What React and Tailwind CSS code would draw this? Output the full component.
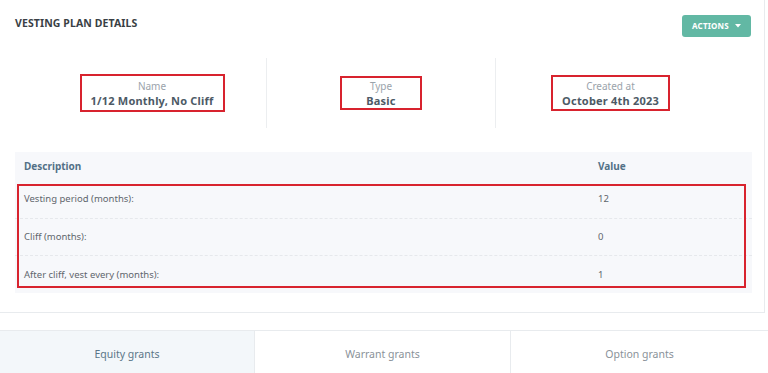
export default function App() {
  const rows = [
    ["Vesting period (months):", "12"],
    ["Cliff (months):", "0"],
    ["After cliff, vest every (months):", "1"],
  ];
  return (
    <div className="w-[768px] h-[373px] bg-white overflow-hidden" style={{ fontFamily: '"Noto Sans", "Open Sans", sans-serif' }}>
      <div className="w-[765px] h-[313px] border-r border-b border-[#e8ebee] bg-white flex flex-col">
        <div className="flex items-start justify-between pl-[15px] pr-[13px] pt-[15px] h-[58px]">
          <div className="text-[10.5px] font-bold text-[#3a3f45] tracking-[0.1px] mt-[1px]">VESTING PLAN DETAILS</div>
          <button className="h-[22px] w-[69px] rounded-[3px] bg-[#62b8a4] text-white text-[8px] font-bold flex items-center justify-center gap-[6px] tracking-[0.2px]">
            ACTIONS
            <svg width="6" height="4" viewBox="0 0 6 4"><path d="M0 0 L6 0 L3 3.5 Z" fill="white" /></svg>
          </button>
        </div>
        <div className="ml-[38px] w-[687px] h-[70px] grid grid-cols-3">
          <div className="flex items-center justify-center border-r border-[#eceef0]">
            <div className="border-2 border-[#d8232e] w-[145px] h-[38px] flex flex-col items-center justify-center pt-[1px]">
              <div className="text-[10px] leading-[13px] text-[#9aa3ab]">Name</div>
              <div className="text-[11px] leading-[15px] font-bold text-[#4d5a66] tracking-[0.2px]">1/12 Monthly, No Cliff</div>
            </div>
          </div>
          <div className="flex items-center justify-center border-r border-[#eceef0]">
            <div className="border-2 border-[#d8232e] w-[82px] h-[34px] flex flex-col items-center justify-center pt-[1px]">
              <div className="text-[10px] leading-[13px] text-[#9aa3ab]">Type</div>
              <div className="text-[11px] leading-[15px] font-bold text-[#4d5a66] tracking-[0.2px]">Basic</div>
            </div>
          </div>
          <div className="flex items-center justify-center">
            <div className="border-2 border-[#d8232e] w-[119px] h-[36px] flex flex-col items-center justify-center pt-[1px]">
              <div className="text-[10px] leading-[13px] text-[#9aa3ab]">Created at</div>
              <div className="text-[11px] leading-[15px] font-bold text-[#4d5a66] tracking-[0.2px]">October 4th 2023</div>
            </div>
          </div>
        </div>
        <div className="ml-[15px] mt-[24px] w-[737px] h-[141px] bg-[#f7f8fb] flex flex-col">
          <div className="h-[29px] flex items-center text-[10px] font-bold text-[#537187]">
            <div className="pl-[9px] w-[583px]">Description</div>
            <div>Value</div>
          </div>
          <div className="relative flex-1 flex flex-col">
            {rows.map(([d, v], i) => (
              <div key={i} className={`flex-1 flex items-center text-[9.5px] text-[#5f666d] ${i < 2 ? "border-b border-dashed border-[#e6e8ec]" : ""}`}>
                <div className="pl-[9px] w-[583px]">{d}</div>
                <div>{v}</div>
              </div>
            ))}
            <div className="absolute left-[2px] right-[6px] top-[3px] bottom-[5px] border-2 border-[#d8232e] pointer-events-none"></div>
          </div>
        </div>
      </div>
      <div className="mt-[17px] h-[48px] border-t border-[#e8ebee] grid grid-cols-[255px_256px_257px]">
        <div className="bg-[#f3f7fa] border-r border-[#e8ebee] flex items-center justify-center text-[10.5px] text-[#5b7688]">Equity grants</div>
        <div className="bg-white border-r border-[#e8ebee] flex items-center justify-center text-[10.5px] text-[#8a9299]">Warrant grants</div>
        <div className="bg-white flex items-center justify-center text-[10.5px] text-[#8a9299]">Option grants</div>
      </div>
    </div>
  );
}
